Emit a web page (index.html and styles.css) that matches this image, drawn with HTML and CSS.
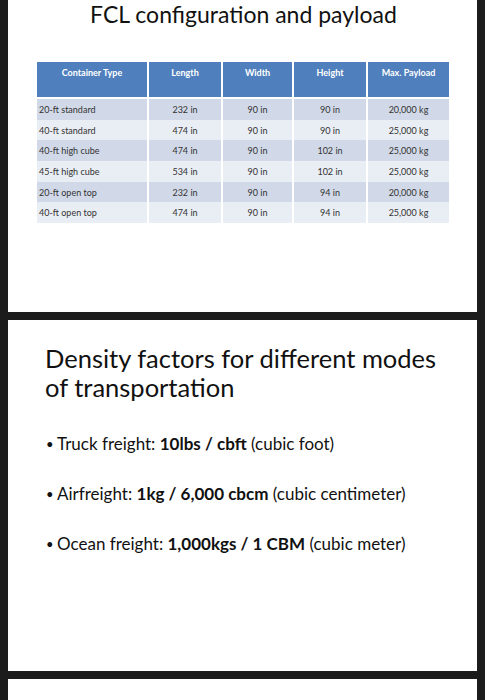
FILE: index.html
```html
<!DOCTYPE html>
<html lang="en">
<head>
<meta charset="utf-8">
<title>FCL configuration and payload</title>
<link rel="stylesheet" href="styles.css">
</head>
<body>
<div class="deck">
  <section class="slide slide-fcl">
    <h1 class="fcl-title">FCL configuration and payload</h1>
    <table class="fcl-table">
      <colgroup>
        <col class="col-type"><col class="col-len"><col class="col-wid"><col class="col-hei"><col class="col-pay">
      </colgroup>
      <thead>
        <tr>
          <th>Container Type</th>
          <th>Length</th>
          <th>Width</th>
          <th>Height</th>
          <th>Max. Payload</th>
        </tr>
      </thead>
      <tbody>
        <tr class="odd"><td>20-ft standard</td><td>232 in</td><td>90 in</td><td>90 in</td><td>20,000 kg</td></tr>
        <tr class="even"><td>40-ft standard</td><td>474 in</td><td>90 in</td><td>90 in</td><td>25,000 kg</td></tr>
        <tr class="odd"><td>40-ft high cube</td><td>474 in</td><td>90 in</td><td>102 in</td><td>25,000 kg</td></tr>
        <tr class="even"><td>45-ft high cube</td><td>534 in</td><td>90 in</td><td>102 in</td><td>25,000 kg</td></tr>
        <tr class="odd"><td>20-ft open top</td><td>232 in</td><td>90 in</td><td>94 in</td><td>20,000 kg</td></tr>
        <tr class="even"><td>40-ft open top</td><td>474 in</td><td>90 in</td><td>94 in</td><td>25,000 kg</td></tr>
      </tbody>
    </table>
  </section>
  <section class="slide slide-density">
    <h2 class="density-title">Density factors for different modes of transportation</h2>
    <ul class="factors">
      <li>Truck freight: <b>10lbs / cbft</b> (cubic foot)</li>
      <li>Airfreight: <b>1kg / 6,000 cbcm</b> (cubic centimeter)</li>
      <li>Ocean freight: <b>1,000kgs / 1 CBM</b> (cubic meter)</li>
    </ul>
  </section>
  <section class="slide slide-next"></section>
</div>
</body>
</html>
```

FILE: styles.css
```css
html, body {
  margin: 0;
  padding: 0;
  background: #1c1c1c;
}
body {
  font-family: Lato, "Open Sans", sans-serif;
  color: #111;
}
.deck {
  padding: 0 8px;
  display: flex;
  flex-direction: column;
  gap: 8px;
  height: 700px;
  overflow: hidden;
}
.slide {
  background: #fff;
  flex: none;
}
.slide-fcl {
  height: 312px;
  display: flex;
  flex-direction: column;
}
.fcl-title {
  margin: 0;
  font-weight: 400;
  font-size: 23px;
  line-height: 28px;
  color: #111;
  text-align: center;
  padding-left: 2px;
}
.fcl-table {
  margin: 34px 0 0 29px;
  width: 412px;
  table-layout: fixed;
  border-collapse: collapse;
  font-size: 9px;
  color: #333;
}
.fcl-table th {
  background: #4f80bd;
  color: #fff;
  font-weight: 700;
  height: 36px;
  vertical-align: top;
  padding: 5px 0 0;
  border-bottom: 2px solid #fff;
  box-sizing: border-box;
}
.fcl-table th + th,
.fcl-table td + td {
  border-left: 2px solid #fff;
}
.fcl-table td {
  height: 20.7px;
  padding: 0;
  text-align: center;
}
.fcl-table td:first-child {
  text-align: left;
  padding-left: 2px;
}
.col-type { width: 111px; }
.col-len { width: 74px; }
.col-wid { width: 71px; }
.col-hei { width: 74px; }
.col-pay { width: 82px; }
.odd td { background: #d1d9e8; }
.even td { background: #e9edf4; }

.slide-density {
  height: 351px;
  padding: 24px 0 0 37px;
  box-sizing: border-box;
}
.density-title {
  margin: 0;
  font-weight: 400;
  font-size: 25.5px;
  line-height: 29px;
  width: 420px;
}
.factors {
  list-style: none;
  margin: 32px 0 0;
  padding: 0;
  font-size: 17px;
  line-height: 20px;
}
.factors li {
  position: relative;
  padding-left: 12px;
  margin-bottom: 30px;
}
.factors li::before {
  content: "\2022";
  position: absolute;
  left: 1px;
  top: 0;
  font-size: 13px;
}
.factors b {
  font-weight: 700;
}
.slide-next {
  flex: 1;
}
```
